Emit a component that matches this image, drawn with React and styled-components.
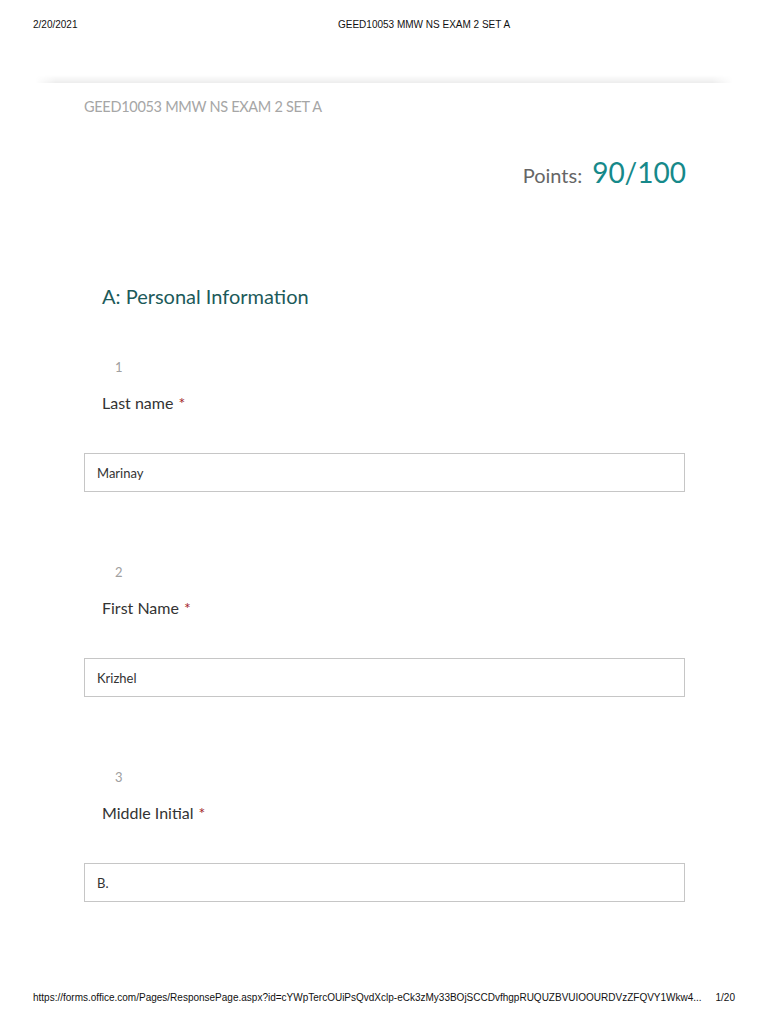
import React from "react";
import styled, { createGlobalStyle } from "styled-components";

const GlobalStyle = createGlobalStyle`
  html, body {
    margin: 0;
    padding: 0;
    background: #ffffff;
  }
  * {
    box-sizing: border-box;
  }
`;

const Page = styled.div`
  width: 768px;
  min-height: 1024px;
  display: flex;
  flex-direction: column;
  font-family: Lato, "Open Sans", sans-serif;
`;

const PrintHeader = styled.div`
  display: grid;
  grid-template-columns: 305px 1fr;
  padding: 19px 33px 0;
  font-family: "Liberation Sans", Arial, sans-serif;
  font-size: 10px;
  line-height: 12px;
  color: #111;
`;

// soft shade along the top edge of the form card
const CardShade = styled.div`
  margin: 44px 35px 0;
  height: 8px;
  background: linear-gradient(to bottom, rgba(0, 0, 0, 0), rgba(0, 0, 0, 0.07));
  -webkit-mask-image: linear-gradient(to right, transparent, #000 3%, #000 97%, transparent);
  mask-image: linear-gradient(to right, transparent, #000 3%, #000 97%, transparent);
`;

const Card = styled.div`
  margin: 0 35px;
  padding: 14px 48px 0 49px;
`;

const FormTitle = styled.div`
  font-size: 14.5px;
  letter-spacing: -0.3px;
  line-height: 20px;
  color: #a6a6a6;
`;

const PointsRow = styled.div`
  margin: 37px -1px 0 0;
  display: flex;
  justify-content: flex-end;
  align-items: baseline;
  gap: 10px;
  line-height: 36px;
`;

const PointsLabel = styled.span`
  font-size: 20px;
  color: #666;
`;

const PointsValue = styled.span`
  font-size: 28px;
  color: #16898a;
`;

const SectionTitle = styled.h2`
  margin: 89px 0 0 18px;
  font-size: 20px;
  font-weight: 400;
  line-height: 28px;
  color: #1c5a5a;
`;

const Question = styled.div`
  margin-top: ${({ $first }) => ($first ? "48px" : "71px")};
`;

const Number = styled.div`
  margin-left: 31px;
  font-size: 13px;
  line-height: 18px;
  color: #a0a0a0;
`;

const Label = styled.div`
  margin: 16px 0 0 18px;
  font-size: 16px;
  line-height: 22px;
  color: #333;

  & > span {
    color: #a4262c;
    margin-left: 5px;
  }
`;

const Answer = styled.div`
  margin-top: 39px;
  height: 39px;
  border: 1px solid #c6c6c6;
  padding: 0 12px;
  display: flex;
  align-items: center;
  font-size: 13px;
  color: #333;
`;

const PrintFooter = styled.div`
  margin-top: auto;
  display: flex;
  justify-content: space-between;
  padding: 0 33px 20px;
  font-family: "Liberation Sans", Arial, sans-serif;
  font-size: 10px;
  line-height: 12px;
  color: #111;
`;

const questions = [
  { n: 1, label: "Last name", value: "Marinay" },
  { n: 2, label: "First Name", value: "Krizhel" },
  { n: 3, label: "Middle Initial", value: "B." },
];

const App = () => {
  return (
    <Page>
      <GlobalStyle />
      <PrintHeader>
        <div>2/20/2021</div>
        <div>GEED10053 MMW NS EXAM 2 SET A</div>
      </PrintHeader>
      <CardShade />
      <Card>
        <FormTitle>GEED10053 MMW NS EXAM 2 SET A</FormTitle>
        <PointsRow>
          <PointsLabel>Points:</PointsLabel>
          <PointsValue>90/100</PointsValue>
        </PointsRow>
        <SectionTitle>A: Personal Information</SectionTitle>
        {questions.map((q, i) => (
          <Question key={q.n} $first={i === 0}>
            <Number>{q.n}</Number>
            <Label>
              {q.label}
              <span>*</span>
            </Label>
            <Answer>{q.value}</Answer>
          </Question>
        ))}
      </Card>
      <PrintFooter>
        <div>
          https://forms.office.com/Pages/ResponsePage.aspx?id=cYWpTercOUiPsQvdXclp-eCk3zMy33BOjSCCDvfhgpRUQUZBVUIOOURDVzZFQVY1Wkw4...
        </div>
        <div>1/20</div>
      </PrintFooter>
    </Page>
  );
};

export default App;
